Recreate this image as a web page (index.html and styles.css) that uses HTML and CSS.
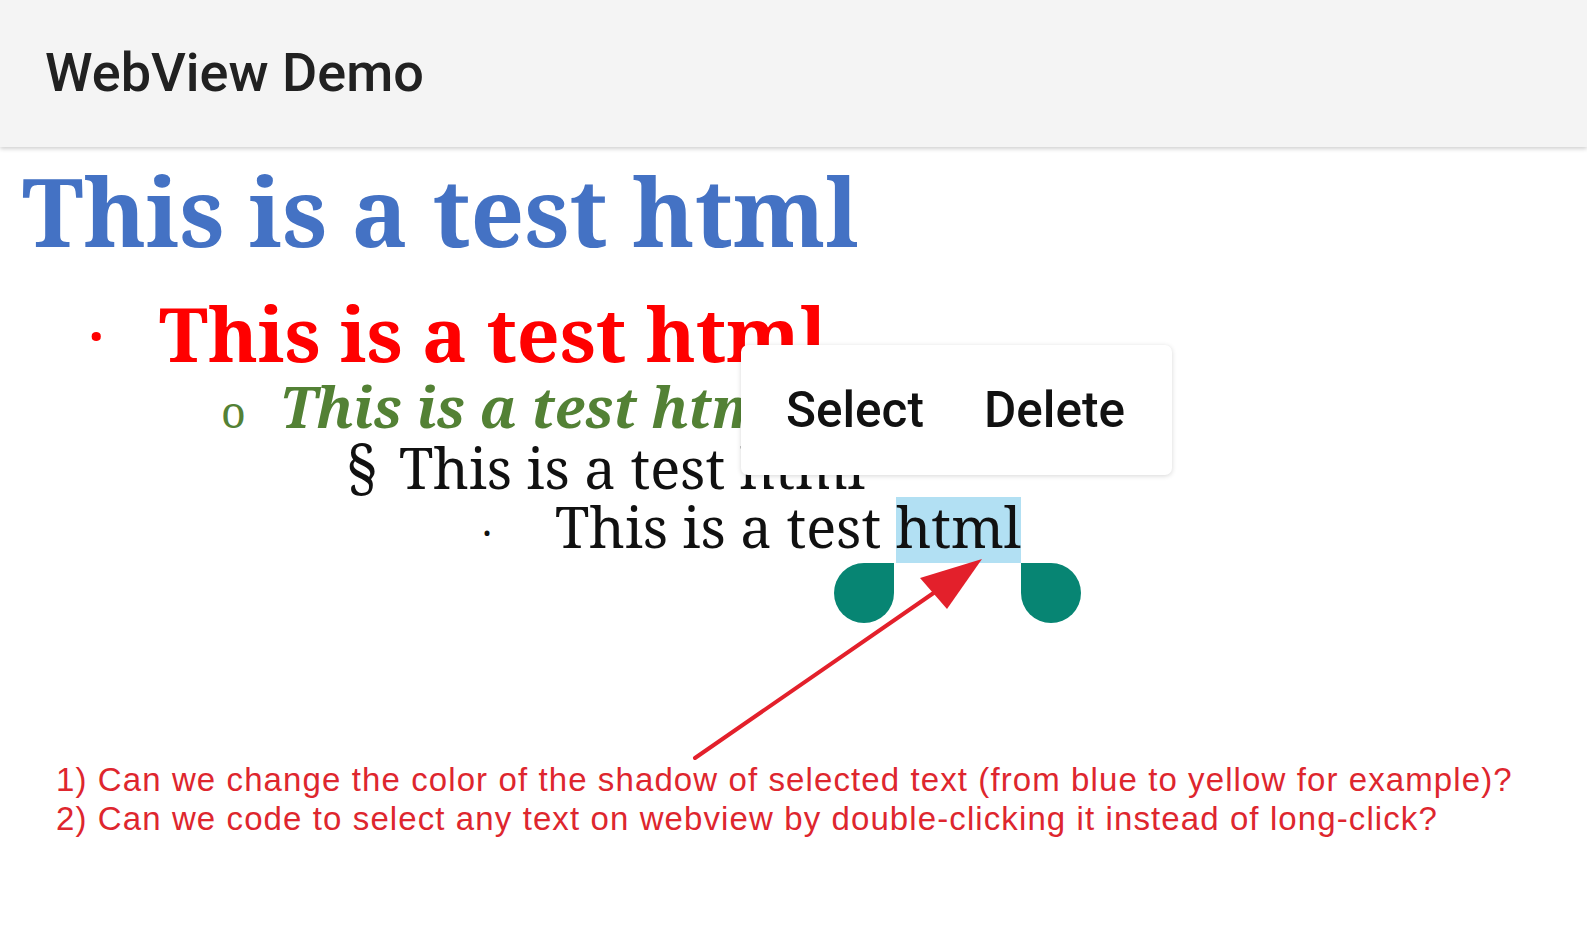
FILE: index.html
```html
<!DOCTYPE html>
<html lang="en">
<head>
    <meta charset="UTF-8">
    <meta name="viewport" content="width=device-width, initial-scale=1.0">
    <title>WebView Demo</title>
    <link rel="stylesheet" href="styles.css">
</head>
<body>
    <header class="toolbar">
        <h1 class="toolbar-title">WebView Demo</h1>
    </header>

    <main class="webview">
        <h2 class="doc-title">This is a test html</h2>

        <div class="item level-1">
            <span class="marker">·</span>
            <span class="text">This is a test html</span>
        </div>
        <div class="item level-2">
            <span class="marker">o</span>
            <span class="text">This is a test html</span>
        </div>
        <div class="item level-3">
            <span class="marker">§</span>
            <span class="text">This is a test html</span>
        </div>
        <div class="item level-4">
            <span class="marker">·</span>
            <span class="text">This is a test <span class="selected">html</span></span>
        </div>

        <div class="notes">
            <p>1) Can we change the color of the shadow of selected text (from blue to yellow for example)?</p>
            <p>2) Can we code to select any text on webview by double-clicking it instead of long-click?</p>
        </div>

        <!-- menu de seleccion -->
        <div class="action-menu">
            <span class="action">Select</span>
            <span class="action">Delete</span>
        </div>
        <div class="handle handle-left"></div>
        <div class="handle handle-right"></div>

        <!-- flecha roja -->
        <svg class="arrow" width="1587" height="944" viewBox="0 0 1587 944">
            <line x1="695" y1="758" x2="935" y2="592" stroke="#e3202b" stroke-width="4" stroke-linecap="round"/>
            <polygon points="982,559 920,578 947,609" fill="#e3202b"/>
        </svg>
    </main>
</body>
</html>
```

FILE: styles.css
```css
body {
    margin: 0;
    background-color: #ffffff;
    font-family: "Noto Serif", "DejaVu Serif", serif;
}

.toolbar {
    height: 147px;
    background-color: #f4f4f4;
    box-shadow: 0 2px 4px rgba(0, 0, 0, 0.18);
    position: relative;
    z-index: 1;
}

.toolbar-title {
    margin: 0;
    padding-left: 45px;
    line-height: 145px;
    font-family: Roboto, "Noto Sans", sans-serif;
    font-weight: 500;
    font-size: 54px;
    color: #212121;
}

.webview {
    position: relative;
    height: 788px;
    padding-top: 9px;
}

.doc-title {
    margin: 0 0 0 22px;
    height: 110px;
    line-height: 110px;
    font-size: 94px;
    font-weight: 700;
    color: #4472c4;
}

.item {
    display: flex;
    align-items: baseline;
    white-space: nowrap;
}

.level-1 {
    margin-top: 27px;
    height: 80px;
    line-height: 80px;
    font-size: 75px;
    font-weight: 700;
    color: #ff0000;
    padding-left: 88px;
}

/* el punto va mas alto que la linea base */
.level-1 .marker {
    align-self: flex-start;
    width: 71px;
    line-height: 84px;
    font-size: 56px;
}

.level-2 {
    margin-top: 3px;
    height: 60px;
    line-height: 60px;
    font-size: 56px;
    font-weight: 700;
    font-style: italic;
    color: #538135;
    padding-left: 221px;
}

.level-2 .marker {
    width: 59px;
    font-size: 43px;
    font-style: normal;
    font-weight: 400;
}

.level-3 {
    height: 60px;
    line-height: 60px;
    font-size: 56px;
    color: #111111;
    padding-left: 345px;
}

.level-3 .marker {
    width: 54px;
    font-size: 60px;
}

.level-4 {
    height: 60px;
    line-height: 60px;
    font-size: 56px;
    color: #111111;
    padding-left: 482px;
}

.level-4 .marker {
    width: 73px;
    font-size: 40px;
}

.selected {
    background-image: linear-gradient(to bottom, transparent 9px, #b2e0f3 9px, #b2e0f3 calc(100% - 1px), transparent calc(100% - 1px));
}

.notes {
    margin: 204px 0 0 56px;
    font-family: "Liberation Sans", Arial, sans-serif;
    font-size: 33px;
    line-height: 39px;
    letter-spacing: 1.1px;
    color: #de262e;
}

.notes p {
    margin: 0;
}

/* overlays */
.action-menu {
    position: absolute;
    left: 741px;
    top: 198px;
    width: 431px;
    height: 130px;
    box-sizing: border-box;
    padding-left: 45px;
    display: flex;
    align-items: center;
    gap: 60px;
    background-color: #ffffff;
    border-radius: 7px;
    box-shadow: 0 1px 5px rgba(0, 0, 0, 0.16);
    font-family: Roboto, "Noto Sans", sans-serif;
    font-weight: 500;
    font-size: 49.5px;
    color: #111111;
}

.handle {
    position: absolute;
    top: 416px;
    width: 60px;
    height: 60px;
    background-color: #078573;
    border-radius: 50%;
}

.handle-left {
    left: 834px;
    border-top-right-radius: 0;
}

.handle-right {
    left: 1021px;
    border-top-left-radius: 0;
}

.arrow {
    position: absolute;
    left: 0;
    top: -147px;
    pointer-events: none;
}
```
